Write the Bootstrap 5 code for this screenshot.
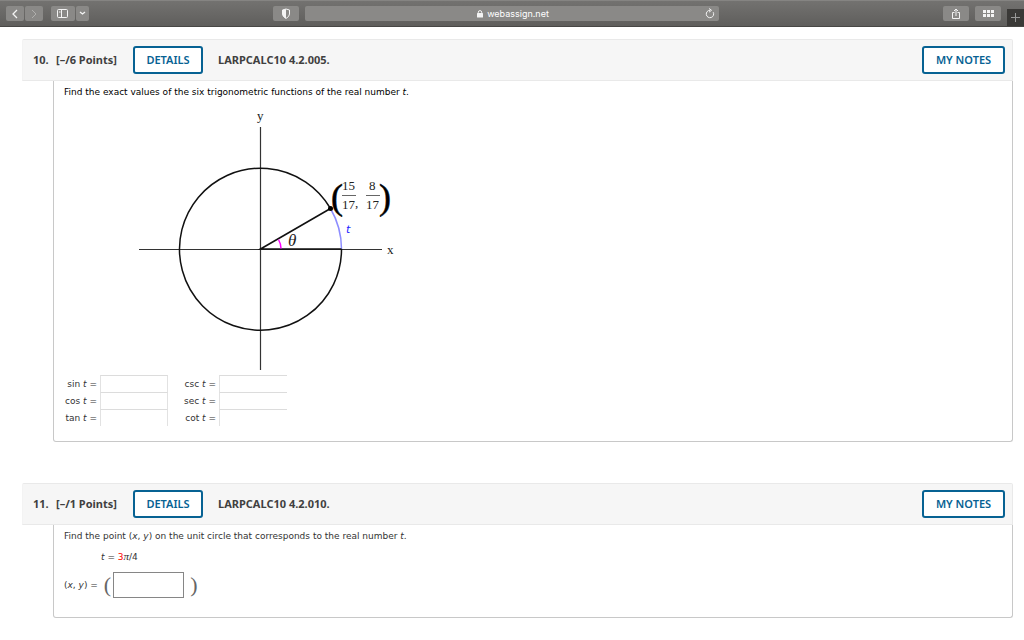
<!DOCTYPE html>
<html lang="en">
<head>
<meta charset="utf-8">
<meta name="viewport" content="width=device-width, initial-scale=1">
<title>WebAssign</title>
<link href="https://cdn.jsdelivr.net/npm/bootstrap@5.3.0/dist/css/bootstrap.min.css" rel="stylesheet">
<style>
  body { font-family: "DejaVu Sans", sans-serif; font-size: 9px; line-height: 14px; color: #333; background: #fff; }
  svg { display: block; }

  /* browser toolbar */
  .toolbar { display: grid; grid-template-columns: 1fr 40.5% 1fr; column-gap: 6px; align-items: center; height: 27px; background: linear-gradient(#737270, #5f5e5c); border-top: 1px solid #858482; border-bottom: 1px solid #484745; }
  .tools-left { padding-left: 6px; }
  .tools-right { gap: 6px; }
  .tool { display: flex; align-items: center; justify-content: center; width: 26px; height: 15px; padding: 0; border: 0; border-radius: 2px; background: #8a8987; color: #f4f4f4; }
  .tool-s { width: 18px; }
  .tool-m { width: 24px; }
  .tool-xs { width: 13px; }
  .joined { gap: 1px; }
  .off { color: #b0afad; }
  .address { height: 15px; border-radius: 2px; background: #8a8987; color: #fff; font: 9px/15px Inter, sans-serif; padding: 0 4px 0 16px; }
  .plain { padding: 0; border: 0; background: none; color: #f4f4f4; }
  .newtab { width: 17px; height: 17px; border-radius: 0; background: #3a3937; color: #999; align-self: end; }

  /* questions */
  .questions { padding: 12px 11px 0 22px; }
  .question { margin-bottom: 41px; }
  .q-head { height: 42px; padding: 0 7px 0 10px; background: #f6f6f6; border: 1px solid #e9e9e9; border-left-color: #f3f3f3; border-radius: 2px 2px 0 0; font: 700 11px/18px "Noto Sans", sans-serif; color: #404040; }
  .q-no { width: 23px; }
  .q-points { width: 77px; }
  .btn-q { height: 28px; width: 70px; padding: 0; border: 2px solid #076293; border-radius: 3px; background: #fff; color: #076293; font: 600 11px/18px "Noto Sans", sans-serif; }
  .btn-notes { width: 83px; }
  .btn-q:hover { background: #076293; color: #fff; }
  .q-code { margin-left: 15px; }
  .q-body { margin-left: 31px; padding: 4px 10px 15px; border: 1px solid #c8c8c8; border-top: 0; border-radius: 0 0 3px 3px; }
  .q-short { padding-bottom: 19px; }
  .q-short .prompt { margin-bottom: 6px; }
  .prompt { margin-bottom: 8px; }
  .red { color: #f00; }
  .pi { font: italic 11px/14px "Liberation Serif", serif; }
  .figure-circle { width: 280px; height: 268px; margin-left: 66px; font-family: "Liberation Serif", serif; }
  .answers { display: grid; grid-template-columns: 33px 68px 45px 68px; column-gap: 3px; grid-auto-rows: 17px; align-items: center; text-align: right; }
  .answers input { width: 100%; height: 17px; padding: 0 3px; border: 1px solid #e2e2e2; border-width: 1px 1px 0; border-top-color: #dcdcdc; font-size: 9px; background: #fff; }
  .answers input.open-side { border-right: 0; }
  .step { padding-left: 37px; }
  .pair { gap: 6px; }
  .pair-open { gap: 2px; }
  .pair-input { width: 71px; height: 26px; padding: 0 4px; border: 1px solid #868686; font-size: 9px; }
  .paren { font: 22px/26px "Liberation Serif", serif; color: #666; }
</style>
</head>
<body>
<header class="toolbar">
  <div class="tools-left d-flex justify-content-between">
    <div class="d-flex gap-2">
      <div class="d-flex joined">
        <button class="tool tool-s" type="button" aria-label="Back"><svg width="8" height="10" fill="none" stroke="currentColor" stroke-width="1.3"><path d="M6 1 2 5l4 4"/></svg></button>
        <button class="tool tool-s off" type="button" aria-label="Forward"><svg width="8" height="10" fill="none" stroke="currentColor"><path d="M2 1l4 4-4 4"/></svg></button>
      </div>
      <div class="d-flex joined">
        <button class="tool tool-m" type="button" aria-label="Sidebar"><svg width="12" height="10" fill="none" stroke="currentColor"><rect x=".5" y=".5" width="10" height="8" rx="1"/><path d="M4.500 1v8M2 3h1.500" /></svg></button>
        <button class="tool tool-xs" type="button" aria-label="Sidebar menu"><svg width="7" height="5" fill="none" stroke="currentColor" stroke-width="1.3"><path d="M1 1l2.500 2L6 1"/></svg></button>
      </div>
    </div>
    <button class="tool" type="button" aria-label="Privacy report"><svg width="10" height="11"><path d="M5 1 8.500 2v4q0 2.500-3.500 4.500Q1.500 8.500 1.500 6V2z" fill="none" stroke="#f4f4f4"/><path d="M5 1 1.500 2v4q0 2.500 3.500 4.500z" fill="#f4f4f4"/></svg></button>
  </div>
  <div class="address d-flex align-items-center">
    <div class="flex-grow-1 d-flex justify-content-center align-items-center gap-1">
      <svg width="6" height="8"><rect y="3" width="6" height="4.500" rx=".5" fill="#f4f4f4"/><path d="M1.300 3.500V2.300a1.700 1.700 0 0 1 3.400 0v1.200" fill="none" stroke="#f4f4f4"/></svg>
      <span>webassign.net</span>
    </div>
    <button class="plain" type="button" aria-label="Reload"><svg width="10" height="11" fill="none" stroke="currentColor"><path d="M8.200 4.200A3.700 3.700 0 1 1 5 2.300"/><path d="M4 .5 6.500 2.300 4 4.200" /></svg></button>
  </div>
  <div class="tools-right d-flex justify-content-end align-items-center h-100">
    <button class="tool" type="button" aria-label="Share"><svg width="10" height="12" fill="none" stroke="currentColor"><path d="M3.500 4.500h-2v6h7v-6h-2M5 8V1M3 3l2-2 2 2"/></svg></button>
    <button class="tool" type="button" aria-label="Tab overview"><svg width="11" height="8" fill="currentColor"><path d="M0 0h3v3H0zM4 0h3v3H4zM8 0h3v3H8zM0 4h3v3H0zM4 4h3v3H4zM8 4h3v3H8z"/></svg></button>
    <button class="tool newtab" type="button" aria-label="New tab"><svg width="9" height="9" stroke="currentColor"><path d="M4.500 0v9M0 4.500h9"/></svg></button>
  </div>
</header>

<main class="questions">
  <section class="question">
    <div class="q-head d-flex align-items-center">
      <span class="q-no">10.</span><span class="q-points">[–/6 Points]</span>
      <button class="btn-q" type="button">DETAILS</button>
      <span class="q-code">LARPCALC10 4.2.005.</span>
      <button class="btn-q btn-notes ms-auto" type="button">MY NOTES</button>
    </div>
    <div class="q-body">
      <p class="prompt text-black">Find the exact values of the six trigonometric functions of the real number <i>t</i>.</p>
      <svg class="figure-circle" viewBox="130 107 280 268" role="img" aria-label="Unit circle with angle theta and arc t" fill="none" stroke="#111">
        <path d="M139 249.500H382M260.500 127V370" stroke="#333" stroke-width="1.200"/>
        <path d="M330.500 208.500A81 81 0 1 0 341.500 249" stroke-width="1.500"/>
        <path d="M330.500 208.500A81 81 0 0 1 341.500 249" stroke="#8d8dff" stroke-width="1.500"/>
        <path d="M330.500 208.500 260.500 249H341.500" stroke-width="1.600"/>
        <path d="M278.500 239.500Q281 244 281 248.500" stroke="#f0f" stroke-width="1.500"/>
        <circle cx="330.500" cy="208.500" r="2.500" fill="#000" stroke="none"/>
        <path d="M342 195.500h14M366 195.500h14" stroke="#666"/>
        <g fill="#222" stroke="none" font-size="13">
          <text x="257" y="120">y</text>
          <text x="387" y="254">x</text>
          <text x="342" y="190">15</text>
          <text x="342" y="209">17</text>
          <text x="355" y="207">,</text>
          <text x="369" y="190">8</text>
          <text x="366" y="209">17</text>
          <text x="288" y="246" font-size="17" font-style="italic">θ</text>
          <text x="346" y="233" font-size="11" font-style="italic" fill="#22f" font-family="DejaVu Sans">t</text>
          <g font-size="36" fill="#000" stroke="#000" stroke-width=".5">
            <text x="331" y="209">(</text>
            <text x="379" y="209">)</text>
          </g>
        </g>
      </svg>
      <div class="answers">
        <label for="sin">sin <i>t</i> =</label><input id="sin" type="text">
        <label for="csc">csc <i>t</i> =</label><input id="csc" class="open-side" type="text">
        <label for="cos">cos <i>t</i> =</label><input id="cos" type="text">
        <label for="sec">sec <i>t</i> =</label><input id="sec" class="open-side" type="text">
        <label for="tan">tan <i>t</i> =</label><input id="tan" type="text">
        <label for="cot">cot <i>t</i> =</label><input id="cot" class="open-side" type="text">
      </div>
    </div>
  </section>

  <section class="question">
    <div class="q-head d-flex align-items-center">
      <span class="q-no">11.</span><span class="q-points">[–/1 Points]</span>
      <button class="btn-q" type="button">DETAILS</button>
      <span class="q-code">LARPCALC10 4.2.010.</span>
      <button class="btn-q btn-notes ms-auto" type="button">MY NOTES</button>
    </div>
    <div class="q-body q-short">
      <p class="prompt">Find the point (<i>x</i>, <i>y</i>) on the unit circle that corresponds to the real number <i>t</i>.</p>
      <p class="step mb-2"><i>t</i> = <span class="red">3</span><span class="pi">π</span>/4</p>
      <div class="pair d-flex align-items-center">
        <label for="pair">(<i>x</i>, <i>y</i>) =</label>
        <div class="pair-open d-flex align-items-center">
          <span class="paren">(</span>
          <input id="pair" class="pair-input" type="text">
        </div>
        <span class="paren">)</span>
      </div>
    </div>
  </section>
</main>
<script src="https://cdn.jsdelivr.net/npm/bootstrap@5.3.0/dist/js/bootstrap.bundle.min.js"></script>
</body>
</html>
